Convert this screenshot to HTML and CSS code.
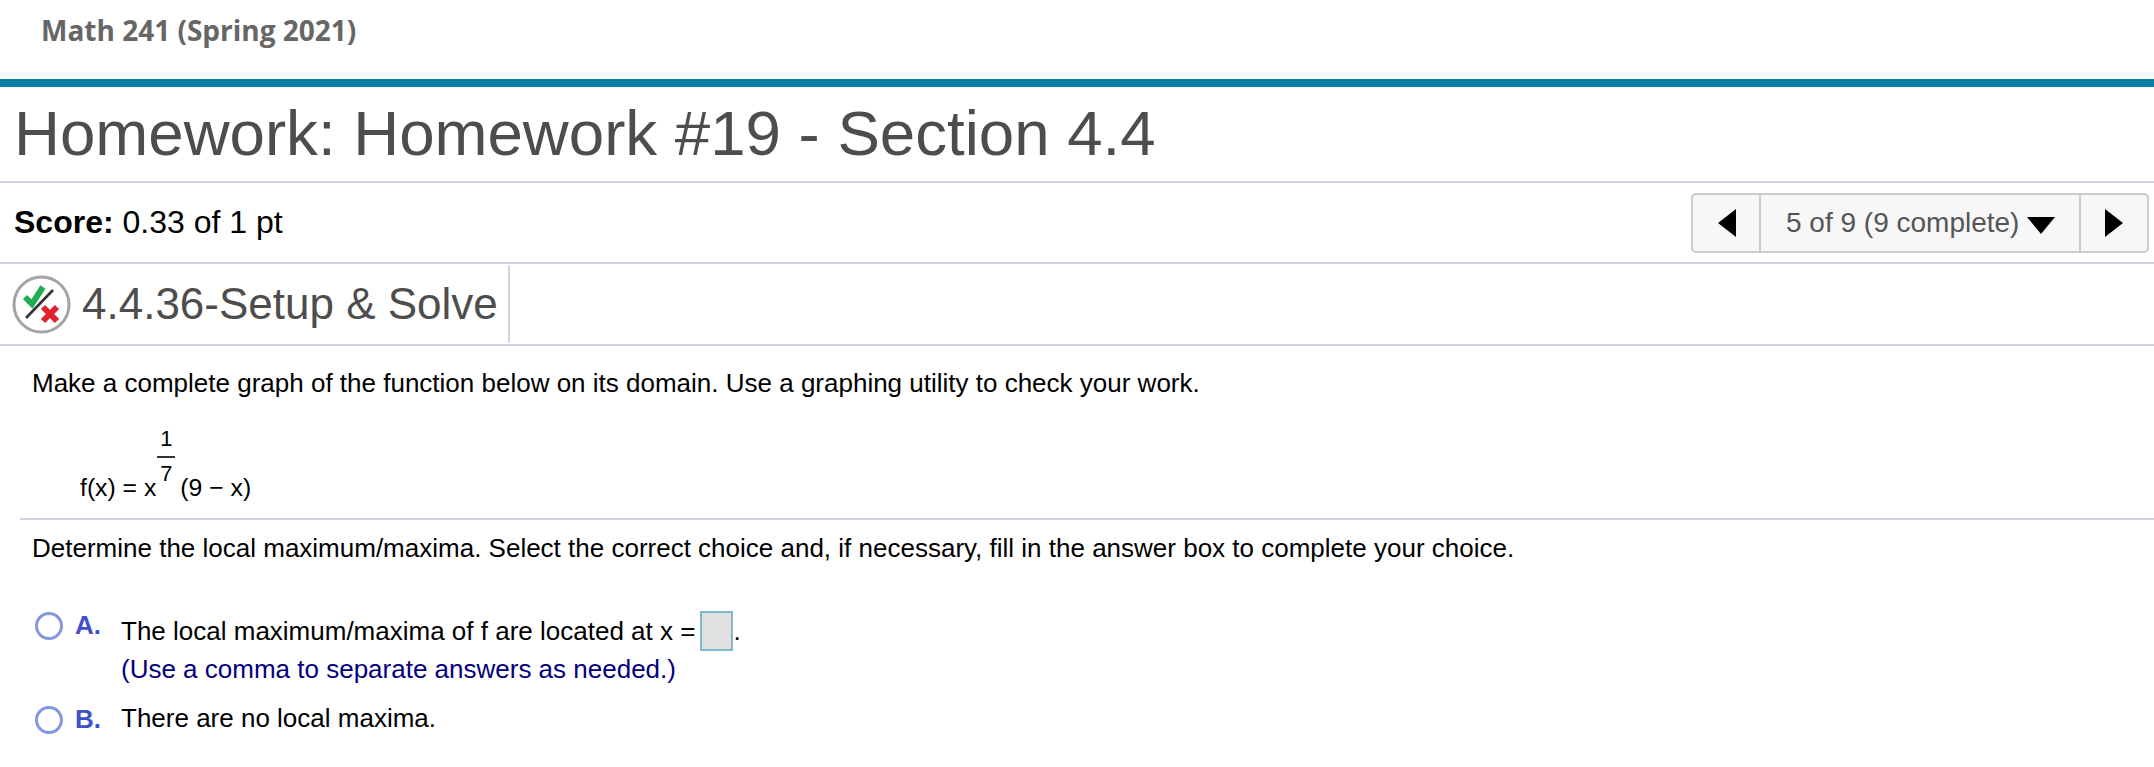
FILE: index.html
```html
<!DOCTYPE html>
<html lang="en">
<head>
<meta charset="utf-8">
<title>Homework #19</title>
<link rel="stylesheet" href="styles.css">
</head>
<body>
<header class="course">Math 241 (Spring 2021)</header>
<h1 class="title">Homework: Homework #19 - Section 4.4</h1>
<div class="score-row">
  <div class="score"><b>Score:</b> 0.33 of 1 pt</div>
  <nav class="pager">
    <div class="pager-arrow"><span class="tri tri-left"></span></div>
    <div class="pager-mid"><span>5 of 9 (9 complete)</span><span class="tri tri-down"></span></div>
    <div class="pager-arrow pager-next"><span class="tri tri-right"></span></div>
  </nav>
</div>
<div class="question-row">
  <div class="question-name">
    <svg class="status-icon" width="59" height="59" viewBox="0 0 59 59" aria-hidden="true">
      <circle cx="29.5" cy="29.5" r="27.5" fill="#fff" stroke="#a4a4a4" stroke-width="3"/>
      <path d="M14 43 41 15" stroke="#333" stroke-width="2.6" fill="none"/>
      <path d="M13 22 20 29 31 12" stroke="#1fae54" stroke-width="6" fill="none"/>
      <path d="M31 32 45 46M45 32 31 46" stroke="#e0222e" stroke-width="6" fill="none"/>
    </svg>
    <span>4.4.36-Setup &amp; Solve</span>
  </div>
</div>
<main class="content">
  <p class="prompt">Make a complete graph of the function below on its domain. Use a graphing utility to check your work.</p>
  <div class="formula">
    <span>f(x) = x</span>
    <span class="frac"><span class="frac-num">1</span><span class="frac-den">7</span></span>
    <span class="after-frac">(9 &minus; x)</span>
  </div>
  <div class="part">
    <p class="prompt part-prompt">Determine the local maximum/maxima. Select the correct choice and, if necessary, fill in the answer box to complete your choice.</p>
    <div class="choice choice-a">
      <span class="radio"></span>
      <span class="letter">A.</span>
      <div class="choice-body">
        <div class="choice-line">The local maximum/maxima of f are located at x =<span class="answer"></span>.</div>
        <div class="hint">(Use a comma to separate answers as needed.)</div>
      </div>
    </div>
    <div class="choice choice-b">
      <span class="radio"></span>
      <span class="letter">B.</span>
      <div class="choice-body"><div class="choice-line">There are no local maxima.</div></div>
    </div>
  </div>
</main>
</body>
</html>
```
FILE: styles.css
```css
* { box-sizing: border-box; }
html, body { margin: 0; padding: 0; background: #fff; }
body { height: 767px; overflow: hidden; font-family: "Liberation Sans", Arial, sans-serif; color: #000; }
.course {
  height: 87px; padding: 13px 0 0 41px;
  border-bottom: 8px solid #007fa3;
  font-family: "Open Sans", sans-serif; font-weight: 700; font-size: 28px; line-height: 34px; color: #666;
}
.title {
  margin: 0; height: 96px; padding: 0 0 0 14px;
  border-bottom: 2px solid #cfd2e0;
  font-weight: 400; font-size: 63.6px; line-height: 92px; color: #4d4d4d;
}
.score-row {
  height: 81px; padding: 0 5px 0 14px;
  display: flex; align-items: flex-start; justify-content: space-between;
  border-bottom: 2px solid #cfd2e0;
}
.score { font-size: 32px; line-height: 79px; }
.pager {
  margin-top: 10px; width: 458px; height: 60px;
  display: flex;
  border: 2px solid #ccc; border-radius: 5px; background: #f7f7f7;
}
.pager-arrow { width: 68px; display: flex; align-items: center; justify-content: center; border-right: 2px solid #ccc; }
.pager-next { flex: 1; border-right: 0; border-left: 2px solid #ccc; }
.pager-mid { width: 318px; display: flex; align-items: center; padding-left: 25px; gap: 8px; font-size: 28px; color: #555; }
.tri { display: block; width: 0; height: 0; border-style: solid; border-color: transparent; }
.tri-left { border-width: 14px 18px 14px 0; border-right-color: #000; margin-left: 2px; }
.tri-right { border-width: 14px 0 14px 18px; border-left-color: #000; margin-left: 0; }
.tri-down { border-width: 17px 14px 0 14px; border-top-color: #000; margin-top: 4px; }
.question-row { height: 82px; padding-top: 1px; border-bottom: 2px solid #cfd2e0; }
.question-name {
  width: 510px; height: 78px; padding-left: 12px;
  display: flex; align-items: center; gap: 11px;
  border-right: 2px solid #cfd2e0;
  font-size: 44px; color: #4d4d4d;
}
.status-icon { flex: none; }
.prompt { margin: 0; font-size: 26px; line-height: 30px; }
.content { padding: 22px 0 0 20px; }
.content > .prompt { padding-left: 12px; }
.formula {
  margin-left: 60px; height: 120px;
  display: flex; align-items: flex-end; font-size: 24.75px; line-height: 30px; padding-bottom: 15px;
}
.frac { width: 24px; margin-left: -2px; margin-bottom: 18px; display: flex; flex-direction: column; align-items: center; font-size: 22px; }
.frac-num { height: 28px; width: 18px; text-align: center; border-bottom: 2px solid #333; line-height: 17px; }
.frac-den { height: 27px; padding-top: 3px; line-height: 25px; }
.after-frac { margin-left: 2px; }
.part { border-top: 2px solid #cfd2e0; padding-top: 13px; }
.part-prompt { padding-left: 12px; }
.choice { display: flex; padding-left: 15px; }
.choice-a { margin-top: 49px; }
.choice-b { margin-top: 22px; }
.radio { flex: none; width: 28px; height: 28px; border: 3px solid #8497e0; border-radius: 50%; background: #fff; }
.letter { flex: none; width: 46px; margin-left: 12px; font-weight: 700; font-size: 26px; line-height: 26px; color: #3f51c8; }
.choice-body { font-size: 26px; }
.choice-line { line-height: 38px; display: flex; align-items: flex-start; white-space: pre; }
.choice-b .choice-line { line-height: 24px; }
.answer { display: block; width: 33px; height: 40px; margin: -1px 0 0 5px; border: 2px solid #7fb9c9; background: #e0e0e0; }
.hint { color: #000080; line-height: 30px; margin-top: 3px; }
```
